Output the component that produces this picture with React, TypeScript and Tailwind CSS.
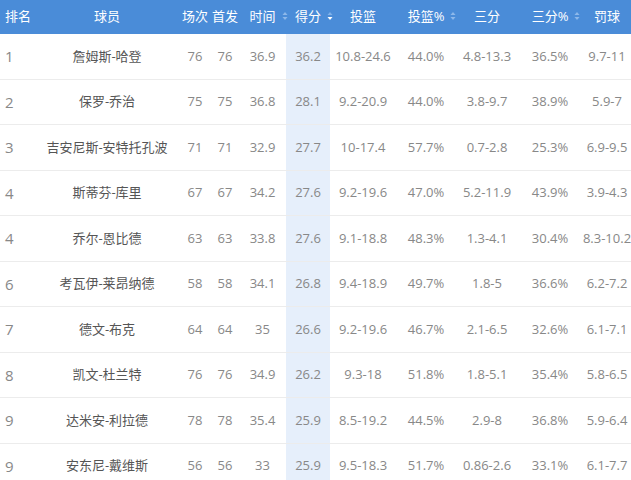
import React from 'react';

type Row = [string, string, string, string, string, string, string, string, string, string, string];

const rows: Row[] = [
    ['1', '詹姆斯-哈登', '76', '76', '36.9', '36.2', '10.8-24.6', '44.0%', '4.8-13.3', '36.5%', '9.7-11'],
    ['2', '保罗-乔治', '75', '75', '36.8', '28.1', '9.2-20.9', '44.0%', '3.8-9.7', '38.9%', '5.9-7'],
    ['3', '吉安尼斯-安特托孔波', '71', '71', '32.9', '27.7', '10-17.4', '57.7%', '0.7-2.8', '25.3%', '6.9-9.5'],
    ['4', '斯蒂芬-库里', '67', '67', '34.2', '27.6', '9.2-19.6', '47.0%', '5.2-11.9', '43.9%', '3.9-4.3'],
    ['4', '乔尔-恩比德', '63', '63', '33.8', '27.6', '9.1-18.8', '48.3%', '1.3-4.1', '30.4%', '8.3-10.2'],
    ['6', '考瓦伊-莱昂纳德', '58', '58', '34.1', '26.8', '9.4-18.9', '49.7%', '1.8-5', '36.6%', '6.2-7.2'],
    ['7', '德文-布克', '64', '64', '35', '26.6', '9.2-19.6', '46.7%', '2.1-6.5', '32.6%', '6.1-7.1'],
    ['8', '凯文-杜兰特', '76', '76', '34.9', '26.2', '9.3-18', '51.8%', '1.8-5.1', '35.4%', '5.8-6.5'],
    ['9', '达米安-利拉德', '78', '78', '35.4', '25.9', '8.5-19.2', '44.5%', '2.9-8', '36.8%', '5.9-6.4'],
    ['9', '安东尼-戴维斯', '56', '56', '33', '25.9', '9.5-18.3', '51.7%', '0.86-2.6', '33.1%', '6.1-7.7'],
];

// column widths, in order
const widths = ['w-[35px]', 'w-[144px]', 'w-[32px]', 'w-[28px]', 'w-[47px]', 'w-[44px]', 'w-[66px]', 'w-[60px]', 'w-[62px]', 'w-[64px]', 'w-[50px]'];

const headers: { label: string; sort?: 'both' | 'down' }[] = [
    { label: '排名' },
    { label: '球员' },
    { label: '场次' },
    { label: '首发' },
    { label: '时间', sort: 'both' },
    { label: '得分', sort: 'down' },
    { label: '投篮' },
    { label: '投篮%', sort: 'both' },
    { label: '三分' },
    { label: '三分%', sort: 'both' },
    { label: '罚球' },
];

const SortIcon = ({ mode }: { mode: 'both' | 'down' }) => (
    <svg className="absolute left-full top-1/2 -translate-y-1/2 ml-[6px]" width="6" height="9" viewBox="0 0 6 9">
        <path d="M3 0.5L5.5 3.5H0.5Z" fill={mode === 'down' ? '#7fb0e8' : '#8db8ea'} />
        <path d="M3 8.5L5.5 5.5H0.5Z" fill={mode === 'down' ? '#ffffff' : '#8db8ea'} />
    </svg>
);

export default function App() {
    return (
        <div className="w-[631px] h-[480px] overflow-hidden bg-white text-[13px]" style={{ fontFamily: '"Open Sans", "Noto Sans CJK SC", sans-serif' }}>
            <div className="flex h-[34px] items-center bg-[#4a8cd8] text-white whitespace-nowrap">
                {headers.map((h, i) => (
                    <div key={h.label} className={`${widths[i]} shrink-0 ${i === 0 ? 'pl-[5px] text-left' : 'text-center'}`}>
                        <span className="relative">
                            {h.label}
                            {h.sort && <SortIcon mode={h.sort} />}
                        </span>
                    </div>
                ))}
            </div>
            {rows.map((r, ri) => (
                <div key={ri} className="flex h-[45.5px] items-stretch border-b border-[#ececec] text-[#888] whitespace-nowrap">
                    {r.map((cell, i) => (
                        <div
                            key={i}
                            className={`${widths[i]} shrink-0 flex items-center ${i === 0 ? 'pl-[5px] justify-start text-[15px]' : 'justify-center'} ${i === 1 ? 'text-[#555]' : ''} ${i === 5 ? 'bg-[#e6effb]' : ''}`}
                        >
                            {cell}
                        </div>
                    ))}
                </div>
            ))}
        </div>
    );
}
